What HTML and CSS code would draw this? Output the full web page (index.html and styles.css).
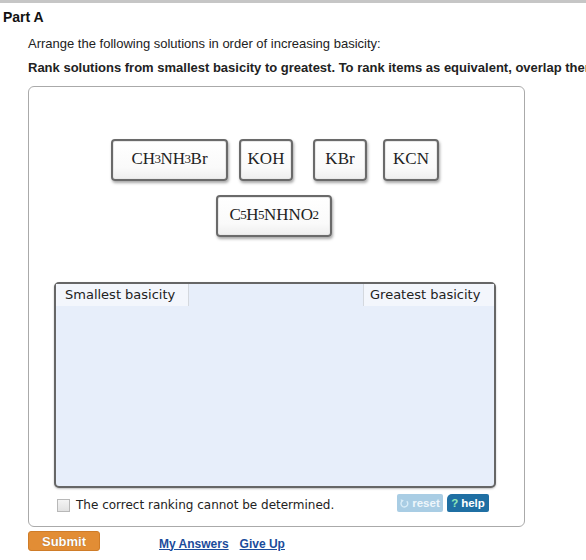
FILE: index.html
```html
<!DOCTYPE html>
<html>
<head>
<meta charset="utf-8">
<link rel="stylesheet" href="styles.css">
</head>
<body>
<div class="topline"></div>
<h2 class="part">Part A</h2>
<p class="intro">Arrange the following solutions in order of increasing basicity:</p>
<p class="instr">Rank solutions from smallest basicity to greatest. To rank items as equivalent, overlap them.</p>
<div class="panel">
  <div class="row row1">
    <div class="tile t1">CH<sub>3</sub>NH<sub>3</sub>Br</div>
    <div class="tile t2">KOH</div>
    <div class="tile t3">KBr</div>
    <div class="tile t4">KCN</div>
  </div>
  <div class="row row2">
    <div class="tile t5">C<sub>5</sub>H<sub>5</sub>NHNO<sub>2</sub></div>
  </div>
  <div class="sortarea">
    <div class="tabs">
      <div class="tab tab-left">Smallest basicity</div>
      <div class="tab tab-right">Greatest basicity</div>
    </div>
  </div>
  <div class="footer">
    <label class="check"><span class="box"></span>The correct ranking cannot be determined.</label>
    <div class="tools">
      <span class="btn reset"><svg width="9" height="10" viewBox="0 0 9 10"><path d="M6.8 3.2 A3.4 3.4 0 1 1 2.2 3" fill="none" stroke="#d8ecf7" stroke-width="1.4"/><path d="M0.6 1.2 L3.8 2.2 L1.6 4.6 Z" fill="#d8ecf7"/></svg>reset</span>
      <span class="btn help"><span class="q">?</span> help</span>
    </div>
  </div>
</div>
<div class="actions">
  <span class="submit">Submit</span>
  <a class="link" href="#">My Answers</a>
  <a class="link" href="#">Give Up</a>
</div>
</body>
</html>
```
FILE: styles.css
```css
html, body {
  margin: 0;
  padding: 0;
  background: #fff;
  width: 586px;
  overflow: hidden;
}
body {
  font-family: "Liberation Sans", Arial, sans-serif;
  color: #222;
}
.topline {
  height: 3px;
  background: #c6c6c6;
}
.part {
  margin: 6px 0 0 3px;
  font-size: 14px;
  line-height: 16px;
  font-weight: bold;
  color: #111;
}
.intro {
  margin: 11px 0 0 28px;
  font-size: 13px;
  line-height: 15px;
  color: #222;
}
.instr {
  margin: 9px 0 0 28px;
  font-size: 13px;
  line-height: 15px;
  font-weight: bold;
  color: #222;
  white-space: nowrap;
}
.panel {
  margin: 11px 0 0 28px;
  width: 495px;
  height: 439px;
  border: 1px solid #aaa;
  border-radius: 6px;
}
.row {
  display: flex;
}
.row1 {
  margin-top: 52px;
  padding-left: 82px;
}
.row2 {
  margin-top: 14px;
  padding-left: 187px;
}
.tile {
  box-sizing: border-box;
  height: 42px;
  border: 2px solid #6a6a6a;
  border-radius: 4px;
  background: linear-gradient(#fff, #fafafa 70%, #eee);
  box-shadow: 1px 2px 3px rgba(0,0,0,0.35), inset 0 0 0 1px #e8e8e8;
  font-family: "Liberation Serif", "Times New Roman", serif;
  font-size: 17px;
  color: #222;
  display: flex;
  align-items: center;
  justify-content: center;
  padding-bottom: 2px;
}
.tile sub {
  font-size: 13px;
  line-height: 0;
  vertical-align: -3px;
  margin: 0 -0.5px;
}
.t1 { width: 117px; }
.t2 { width: 54px; margin-left: 11px; }
.t3 { width: 54px; margin-left: 20px; }
.t4 { width: 56px; margin-left: 16px; }
.t5 { width: 116px; }
.sortarea {
  margin: 45px 0 0 25px;
  box-sizing: border-box;
  width: 442px;
  height: 206px;
  border: 2px solid #666;
  border-radius: 5px;
  background: #e7eefa;
  box-shadow: 0 1px 2px rgba(0,0,0,0.25);
}
.tabs {
  display: flex;
  justify-content: space-between;
}
.tab {
  height: 22px;
  background: #f3f6fc;
  font-family: "DejaVu Sans", Verdana, sans-serif;
  font-size: 13px;
  line-height: 22px;
  color: #222;
}
.tab-left {
  width: 123px;
  padding-left: 9px;
  border-right: 1px solid #d4d8de;
}
.tab-right {
  width: 124px;
  padding-left: 6px;
  border-left: 1px solid #d4d8de;
}
.footer {
  display: flex;
  justify-content: space-between;
  align-items: center;
  margin: 10px 0 0 28px;
  width: 432px;
}
.check {
  display: flex;
  align-items: center;
  font-family: "DejaVu Sans", Verdana, sans-serif;
  font-size: 12px;
  color: #222;
}
.box {
  width: 11px;
  height: 11px;
  border: 1px solid #b8b8b8;
  background: linear-gradient(#f4f4f4, #e2e2e2);
  margin-right: 6px;
  margin-top: 1px;
}
.tools {
  display: flex;
  gap: 4px;
  margin-top: -4px;
}
.btn {
  height: 18px;
  line-height: 18px;
  font-size: 11.5px;
  font-weight: bold;
  color: #fff;
  display: flex;
  align-items: center;
  border-radius: 2px;
}
.reset {
  width: 46px;
  justify-content: center;
  background: #a9cde4;
  gap: 3px;
  color: #eef6fb;
}
.help {
  width: 42px;
  justify-content: center;
  background: #1f6fa3;
  border-radius: 5px 2px 2px 2px;
}
.help .q {
  color: #8fe8b8;
  margin-right: 3px;
}
.actions {
  display: flex;
  align-items: center;
  margin: 4px 0 0 28px;
}
.submit {
  width: 72px;
  height: 20px;
  line-height: 20px;
  background: #e28d35;
  border: 1px solid #cf7c28;
  box-sizing: border-box;
  border-radius: 3px;
  color: #fff;
  font-weight: bold;
  font-size: 13px;
  text-align: center;
  text-shadow: 0 0 1px rgba(0,0,0,0.35);
}
.link {
  font-size: 12px;
  font-weight: bold;
  color: #1b4b9b;
  text-decoration: underline;
  margin-top: 5px;
}
.submit + .link {
  margin-left: 59px;
}
.link + .link {
  margin-left: 11px;
}
```
